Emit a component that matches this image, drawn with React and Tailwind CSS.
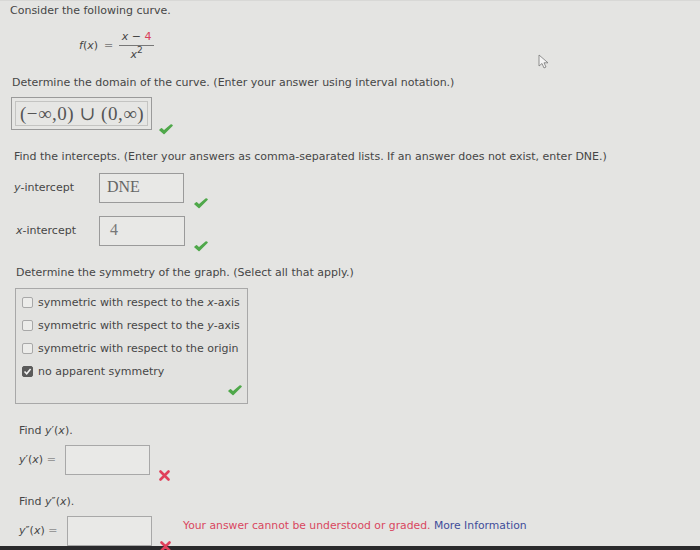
import React from "react";

const sans = { fontFamily: '"DejaVu Sans", Verdana, sans-serif' };
const mathFont = { fontFamily: '"Liberation Serif", "DejaVu Serif", serif' };

function Check({ className = "" }) {
  return (
    <svg width="14" height="11" viewBox="0 0 14 11" className={className}>
      <path d="M1 6 L5 9.5 L13 1.5 L12 1 L5 7 L2.5 4.8 Z" fill="#4fa84a" stroke="#4fa84a" strokeWidth="1.6" strokeLinejoin="round" />
    </svg>
  );
}

function Cross({ className = "" }) {
  return (
    <svg width="11" height="11" viewBox="0 0 11 11" className={className}>
      <path d="M1.5 1.5 L9.5 9.5 M9.5 1.5 L1.5 9.5" stroke="#e0405a" strokeWidth="2.6" strokeLinecap="round" />
    </svg>
  );
}

function Box({ checked }) {
  return (
    <span
      className={
        "inline-flex items-center justify-center w-[11px] h-[11px] rounded-[2px] border " +
        (checked ? "bg-[#5a5a5a] border-[#5a5a5a]" : "bg-[#ececea] border-[#a8a8a8]")
      }
    >
      {checked && (
        <svg width="9" height="9" viewBox="0 0 9 9">
          <path d="M1.5 4.5 L3.7 6.8 L7.6 2" stroke="#f2f2f2" strokeWidth="1.6" fill="none" />
        </svg>
      )}
    </span>
  );
}

export default function App() {
  return (
    <div className="w-[700px] h-[550px] bg-[#e4e4e2] text-[#464646] text-[11px] leading-[16px] overflow-hidden flex flex-col" style={sans}>
      <div className="h-[4px] bg-[#ececeb] border-b border-[#d8d8d6]"></div>
      <div className="flex-1 relative pl-[10px]">
        <div className="mt-[2px]">Consider the following curve.</div>

        <div className="flex items-center ml-[69px] mt-[11px] h-[32px]">
          <span className="italic">f</span>
          <span>(</span>
          <span className="italic">x</span>
          <span>)</span>
          <span className="mx-[6px] text-[#888]">=</span>
          <span className="flex flex-col items-center">
            <span className="px-[2px] leading-[14px] h-[14px] mb-px">
              <span className="italic">x</span> − <span className="text-[#d9405a]">4</span>
            </span>
            <span className="w-[35px] h-px bg-[#777]"></span>
            <span className="leading-[14px] h-[16px] pt-[2px] italic">
              x<span className="relative -top-[5px] text-[9px] not-italic">2</span>
            </span>
          </span>
        </div>

        <svg className="absolute left-[538px] top-[53px]" width="12" height="16" viewBox="0 0 12 16">
          <path d="M1 1 L1 12 L4 9.5 L6 14 L8 13 L6 8.8 L10 8.8 Z" fill="#f4f4f4" stroke="#777" strokeWidth="0.8" />
        </svg>

        <div className="ml-[2px] mt-[13px]">Determine the domain of the curve. (Enter your answer using interval notation.)</div>

        <div className="flex items-end mt-[6px] ml-px">
          <div className="w-[141px] h-[33px] border border-[#9a9a9a] bg-[#e6e6e4] flex items-center p-[3px]">
            <div className="w-full h-full border border-[#c4c4c2] flex items-center pl-[4px] text-[19px] text-[#555] tracking-[0.5px]" style={mathFont}>
              (−∞,0) ∪ (0,∞)
            </div>
          </div>
          <Check className="ml-[7px] -mb-[5px]" />
        </div>

        <div className="ml-[4px] mt-[19px]">Find the intercepts. (Enter your answers as comma-separated lists. If an answer does not exist, enter DNE.)</div>

        <div className="flex items-end mt-[8px] ml-[4px]">
          <div className="w-[85px] self-center"><span className="italic">y</span>-intercept</div>
          <div className="w-[85px] h-[30px] border border-[#9a9a9a] bg-[#e8e8e6] pl-[7px] pt-[3px] leading-[20px] text-[16px] text-[#666]" style={mathFont}>DNE</div>
          <Check className="ml-[10px] -mb-[6px]" />
        </div>

        <div className="flex items-end mt-[13px] ml-[6px]">
          <div className="w-[83px] self-center"><span className="italic">x</span>-intercept</div>
          <div className="w-[86px] h-[30px] border border-[#9a9a9a] bg-[#e8e8e6] pl-[10px] pt-[3px] leading-[20px] text-[16px] text-[#777]" style={mathFont}>4</div>
          <Check className="ml-[9px] -mb-[6px]" />
        </div>

        <div className="ml-[6px] mt-[19px]">Determine the symmetry of the graph. (Select all that apply.)</div>

        <div className="ml-[5px] mt-[7px] w-[233px] h-[116px] border border-[#a8a8a8] bg-[#e2e2e0] pl-[6px] pt-[2px] relative">
          <div className="flex items-center gap-[5px] h-[23px]"><Box /><span>symmetric with respect to the <span className="italic">x</span>-axis</span></div>
          <div className="flex items-center gap-[5px] h-[23px]"><Box /><span>symmetric with respect to the <span className="italic">y</span>-axis</span></div>
          <div className="flex items-center gap-[5px] h-[23px]"><Box /><span>symmetric with respect to the origin</span></div>
          <div className="flex items-center gap-[5px] h-[23px]"><Box checked /><span>no apparent symmetry</span></div>
          <Check className="absolute right-[5px] bottom-[7px]" />
        </div>

        <div className="ml-[9px] mt-[19px]">Find <span className="italic">y</span>′(<span className="italic">x</span>).</div>

        <div className="flex items-end ml-[9px] mt-[6px]">
          <div className="w-[46px] self-center"><span className="italic">y</span>′(<span className="italic">x</span>) <span className="text-[#999]">=</span></div>
          <div className="w-[85px] h-[30px] border border-[#a8a8a8] bg-[#e9e9e7]"></div>
          <Cross className="ml-[9px] -mb-[6px]" />
        </div>

        <div className="ml-[9px] mt-[19px]">Find <span className="italic">y</span>″(<span className="italic">x</span>).</div>

        <div className="flex items-end ml-[9px] mt-[6px]">
          <div className="w-[48px] self-center"><span className="italic">y</span>″(<span className="italic">x</span>) <span className="text-[#999]">=</span></div>
          <div className="w-[85px] h-[30px] border border-[#a8a8a8] bg-[#e9e9e7]"></div>
          <Cross className="ml-[8px] -mb-[6px]" />
          <div className="ml-[12px] self-start mt-[2px] text-[10.8px]">
            <span className="text-[#d9475f]">Your answer cannot be understood or graded. </span>
            <span className="text-[#3f4d9a]">More Information</span>
          </div>
        </div>
      </div>
      <div className="h-[4px] bg-[#2a2a2c] shrink-0"></div>
    </div>
  );
}
